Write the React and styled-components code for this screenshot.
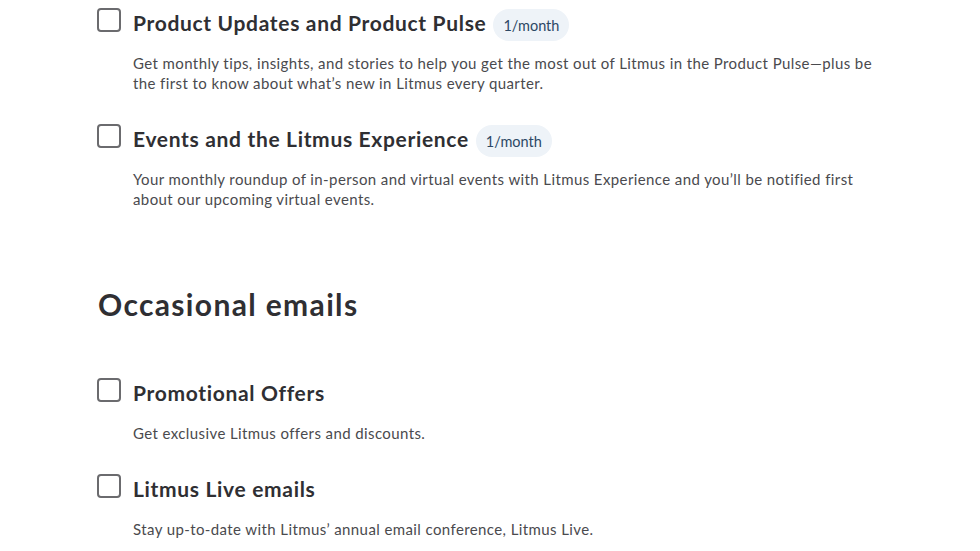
import React from "react";
import styled, { createGlobalStyle } from "styled-components";

const Global = createGlobalStyle`
  html, body { margin: 0; padding: 0; background: #fff; }
  body { font-family: Lato, "Open Sans", sans-serif; -webkit-font-smoothing: antialiased; }
`;

const Page = styled.div`
  padding: 9px 40px 0 97px;
  max-width: 780px;
`;

const Section = styled.section`
  display: flex;
  flex-direction: column;
`;

const Heading = styled.h2`
  margin: 46px 0 58px 1px;
  font-size: 30px;
  line-height: 34px;
  font-weight: 700;
  letter-spacing: 1.35px;
  color: #2f2f33;
`;

const Item = styled.div`
  display: flex;
  flex-direction: column;
  margin-bottom: 32px;
`;

const Header = styled.label`
  display: flex;
  align-items: flex-start;
  gap: 12px;
  min-height: 32px;
  cursor: pointer;
`;

const Box = styled.span`
  box-sizing: border-box;
  width: 24px;
  height: 24px;
  border: 2px solid #6b6b6e;
  border-radius: 4px;
  flex: none;
  margin-top: -1px;
`;

const Title = styled.span`
  font-size: 21px;
  line-height: 32px;
  font-weight: 700;
  letter-spacing: 0.67px;
  color: #2f2f33;
  position: relative;
  top: -2px;
`;

const Badge = styled.span`
  display: inline-flex;
  align-items: center;
  height: 32px;
  padding: 0 10px;
  border-radius: 16px;
  background: #eef3f8;
  color: #2c4865;
  font-size: 14.5px;
  margin-left: -5px;
`;

const Desc = styled.p`
  margin: 12px 0 0 36px;
  font-size: 15px;
  line-height: 20px;
  letter-spacing: 0.4px;
  color: #4a4a4e;
`;

const Option = ({ title, badge, children }) => (
  <Item>
    <Header>
      <Box />
      <Title>{title}</Title>
      {badge && <Badge>{badge}</Badge>}
    </Header>
    <Desc>{children}</Desc>
  </Item>
);

export default function App() {
  return (
    <>
      <Global />
      <Page>
        <Section>
          <Option title="Product Updates and Product Pulse" badge="1/month">
            Get monthly tips, insights, and stories to help you get the most out of Litmus in the Product Pulse—plus be the first to know about what’s new in Litmus every quarter.
          </Option>
          <Option title="Events and the Litmus Experience" badge="1/month">
            Your monthly roundup of in-person and virtual events with Litmus Experience and you’ll be notified first about our upcoming virtual events.
          </Option>
        </Section>
        <Section>
          <Heading>Occasional emails</Heading>
          <Option title="Promotional Offers">
            Get exclusive Litmus offers and discounts.
          </Option>
          <Option title="Litmus Live emails">
            Stay up-to-date with Litmus’ annual email conference, Litmus Live.
          </Option>
        </Section>
      </Page>
    </>
  );
}
